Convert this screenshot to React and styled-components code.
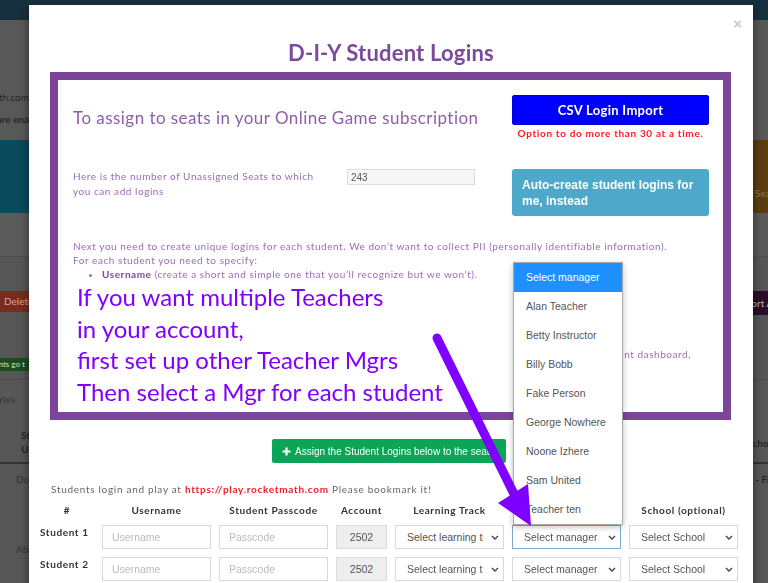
import React from 'react';
import styled, { createGlobalStyle } from 'styled-components';

const GlobalStyle = createGlobalStyle`
  html, body {
    margin: 0;
    padding: 0;
  }
  body {
    font-family: Lato, "Open Sans", Arial, sans-serif;
    background: #575757;
    overflow: hidden;
  }
  * {
    box-sizing: border-box;
  }
`;

/* ---------- dimmed page behind the modal ---------- */

const BackPage = styled.div`
  height: 583px;
  display: flex;
  flex-direction: column;
  overflow: hidden;
`;

const BackRow = styled.div`
  flex: none;
  display: grid;
  grid-template-columns: 29px 1fr 15px;
  height: ${p => p.$h}px;
  background: ${p => p.$bg || 'transparent'};
  border-bottom: ${p => (p.$line ? `${p.$lineW || 1}px solid ${p.$line}` : 'none')};
`;

const Rail = styled.div`
  display: flex;
  flex-direction: column;
  align-items: ${p => (p.$end ? 'flex-end' : 'flex-start')};
  background: ${p => p.$bg || 'transparent'};
  padding-top: ${p => p.$pt || 0}px;
  min-width: 0;
  white-space: nowrap;
`;

const BackText = styled.div`
  align-self: ${p => p.$self || 'auto'};
  margin-top: ${p => p.$mt || 0}px;
  margin-left: ${p => p.$ml || 0}px;
  padding-right: ${p => p.$pr || 0}px;
  font-size: ${p => p.$size || 10}px;
  line-height: 14px;
  font-weight: ${p => (p.$bold ? 700 : 400)};
  color: ${p => p.$color || '#262626'};
`;

const BackChip = styled.div`
  align-self: ${p => p.$self || 'auto'};
  margin-top: ${p => p.$mt || 0}px;
  margin-left: ${p => p.$ml || 0}px;
  height: ${p => p.$h}px;
  padding: 0 4px;
  background: ${p => p.$bg};
  color: ${p => p.$color};
  font-size: ${p => p.$size || 10}px;
  font-weight: ${p => (p.$bold ? 700 : 400)};
  line-height: ${p => p.$h}px;
`;

/* ---------- modal ---------- */

const Modal = styled.div`
  position: fixed;
  top: 5px;
  left: 29px;
  width: 724px;
  height: 600px;
  background: #fff;
  box-shadow: 0 3px 9px rgba(0, 0, 0, 0.5);
  padding: 0 15px 0 11px;
  display: flex;
  flex-direction: column;
`;

const Close = styled.div`
  position: absolute;
  top: 11px;
  right: 11px;
  font-family: "Liberation Sans", Arial, sans-serif;
  font-size: 15px;
  font-weight: 700;
  line-height: 1;
  color: #c9c9c9;
`;

const Title = styled.h2`
  margin: 34px 0 5px;
  padding-left: 4px;
  text-align: center;
  font-size: 22px;
  line-height: 28px;
  font-weight: 700;
  letter-spacing: 0.2px;
  color: #7b4a9b;
`;

const PurpleBox = styled.div`
  margin: 0 7px 0 10px;
  border: 8px solid #7b4598;
  padding: 15px 14px 5px 15px;
  display: grid;
  grid-template-columns: 1fr 197px;
  column-gap: 12px;
`;

const Lead = styled.div`
  align-self: center;
  font-size: 17px;
  line-height: 22px;
  color: #8d5fab;
  letter-spacing: 0.45px;
`;

const CsvCol = styled.div`
  display: flex;
  flex-direction: column;
`;

const CsvButton = styled.div`
  height: 30px;
  background: #0000ff;
  border: 1px solid #0000d8;
  border-radius: 2px;
  color: #fff;
  font-size: 13px;
  font-weight: 700;
  letter-spacing: 0.3px;
  display: flex;
  align-items: center;
  justify-content: center;
`;

const CsvNote = styled.div`
  margin-top: 2px;
  text-align: center;
  color: #ff1a1a;
  font-size: 10px;
  font-weight: 700;
  letter-spacing: 0.65px;
  line-height: 13px;
`;

const SeatsRow = styled.div`
  margin-top: 29px;
  display: flex;
  align-items: flex-start;
`;

const SmallText = styled.div`
  font-size: 10px;
  line-height: ${p => p.$lh || 14}px;
  color: #9a6cb5;
  letter-spacing: 0.55px;
`;

const SeatsText = styled(SmallText)`
  width: 274px;
  flex: none;
`;

const SeatsInput = styled.input`
  width: 128px;
  height: 16px;
  border: 1px solid #dcdcdc;
  background: #f7f7f7;
  padding: 0 3px;
  font-family: "Liberation Sans", Arial, sans-serif;
  font-size: 10px;
  color: #555;
`;

const AutoButton = styled.div`
  margin-top: 29px;
  height: 47px;
  background: #4ea8ca;
  border-radius: 3px;
  padding: 0 10px;
  display: flex;
  align-items: center;
  color: #fff;
  font-family: "Liberation Sans", Arial, sans-serif;
  font-size: 12px;
  font-weight: 700;
  line-height: 16px;
`;

const NextText = styled(SmallText)`
  grid-column: 1 / -1;
  margin-top: 23px;
`;

const Bullets = styled.ul`
  margin: 0;
  padding-left: 29px;

  strong {
    color: #7a4a9a;
  }
`;

const BigText = styled.div`
  padding-left: 4px;
  font-size: 24px;
  line-height: 31.5px;
  color: #8000ff;
  white-space: nowrap;
`;

const SideNote = styled(SmallText)`
  padding-top: 66px;
  padding-right: 18px;
  text-align: right;
  white-space: nowrap;
`;

const AssignButton = styled.div`
  align-self: center;
  margin-top: 19px;
  width: 234px;
  height: 24px;
  background: #0aa557;
  border-radius: 2px;
  padding-left: 10px;
  display: flex;
  align-items: center;
  gap: 4px;
  overflow: hidden;
  white-space: nowrap;
  color: #fff;
  font-family: "Liberation Sans", Arial, sans-serif;
  font-size: 10px;
`;

const LoginLine = styled.div`
  margin-top: 19px;
  padding-left: 11px;
  font-size: 10px;
  line-height: 14px;
  letter-spacing: 0.7px;
  color: #666;

  b {
    color: #ee1c25;
  }
`;

const StudentGrid = styled.div`
  margin-top: 7px;
  display: grid;
  grid-template-columns: 54px 109px 109px 51px 109px 109px 109px;
  column-gap: 8px;
  row-gap: 8px;
  align-items: start;
`;

const HeadCell = styled.div`
  text-align: center;
  font-size: 10px;
  font-weight: 700;
  letter-spacing: 0.6px;
  line-height: 14px;
  color: #333;
  white-space: nowrap;
`;

const RowLabel = styled.div`
  font-size: 10px;
  font-weight: 700;
  letter-spacing: 0.6px;
  line-height: 14px;
  color: #333;
  white-space: nowrap;
`;

const TextField = styled.input`
  width: 100%;
  height: 24px;
  border: 1px solid #d8d8e3;
  padding: 0 9px;
  font-family: "Liberation Sans", Arial, sans-serif;
  font-size: 10.5px;
  color: #555;
  background: #fff;

  &::placeholder {
    color: #bbb;
  }
`;

const AccountField = styled.div`
  height: 24px;
  border: 1px solid #dcdcdc;
  background: #eee;
  display: flex;
  align-items: center;
  justify-content: center;
  font-family: "Liberation Sans", Arial, sans-serif;
  font-size: 10.5px;
  color: #555;
`;

const SelectBox = styled.div`
  position: relative;
  height: 24px;
  border: 1px solid ${p => (p.$focus ? '#7fa8cf' : '#d8d8e3')};
  padding: 0 4px 0 11px;
  display: flex;
  align-items: center;
  gap: 8px;
  font-family: "Liberation Sans", Arial, sans-serif;
  font-size: 10.5px;
  color: #555;
  background: #fff;
`;

const SelectLabel = styled.span`
  flex: 1;
  overflow: hidden;
  white-space: nowrap;
`;

const Dropdown = styled.div`
  position: absolute;
  left: 0;
  bottom: calc(100% + 1px);
  width: 110px;
  background: #fff;
  border: 1px solid #a8a8a8;
  box-shadow: 0 2px 6px rgba(0, 0, 0, 0.25);
  z-index: 5;
`;

const Option = styled.div`
  height: 29px;
  line-height: 29px;
  padding-left: 12px;
  font-family: "Liberation Sans", Arial, sans-serif;
  font-size: 10.5px;
  color: ${p => (p.$active ? '#fff' : '#555')};
  background: ${p => (p.$active ? '#1e90ff' : '#fff')};
  white-space: nowrap;
`;

const ArrowLayer = styled.svg`
  position: absolute;
  left: 0;
  top: 0;
  pointer-events: none;
  z-index: 10;
`;

const Chevron = () => (
  <svg width="8" height="5" viewBox="0 0 8 5">
    <path d="M1 1 L4 4 L7 1" fill="none" stroke="#444" strokeWidth="1.4" />
  </svg>
);

const PlusIcon = () => (
  <svg width="9" height="9" viewBox="0 0 9 9">
    <path d="M4.5 0.5 V8.5 M0.5 4.5 H8.5" stroke="#fff" strokeWidth="2.2" />
  </svg>
);

const managers = [
  'Select manager',
  'Alan Teacher',
  'Betty Instructor',
  'Billy Bobb',
  'Fake Person',
  'George Nowhere',
  'Noone Izhere',
  'Sam United',
  'Teacher ten',
];

const headers = ['#', 'Username', 'Student Passcode', 'Account', 'Learning Track', 'Teacher', 'School (optional)'];

const Select = ({ label, focus, children }) => (
  <SelectBox $focus={focus}>
    <SelectLabel>{label}</SelectLabel>
    <Chevron />
    {children}
  </SelectBox>
);

const StudentRow = ({ n, open }) => (
  <>
    <RowLabel>Student {n}</RowLabel>
    <TextField placeholder="Username" />
    <TextField placeholder="Passcode" />
    <AccountField>2502</AccountField>
    <Select label="Select learning track" />
    <Select label="Select manager" focus={open}>
      {open && (
        <Dropdown>
          {managers.map((m, i) => (
            <Option key={m} $active={i === 0}>{m}</Option>
          ))}
        </Dropdown>
      )}
    </Select>
    <Select label="Select School" />
  </>
);

const Background = () => (
  <BackPage>
    <BackRow $h={20} $bg="#17303f" />
    <BackRow $h={120} $bg="#585858">
      <Rail $end $pt={70}>
        <BackText>play.rocketmath.com</BackText>
        <BackText $mt={8} $bold>Logins are ena</BackText>
      </Rail>
      <div />
      <Rail />
    </BackRow>
    <BackRow $h={73} $bg="#0b4a5b">
      <Rail />
      <div />
      <Rail $bg="#5c3d0e" $pt={46}>
        <BackText $ml={2} $color="#8d7656">Search</BackText>
      </Rail>
    </BackRow>
    <BackRow $h={44} $bg="#5b5b5b" $line="#4e4e4e" />
    <BackRow $h={123} $bg="#565656" $line="#4a4a4a">
      <Rail $pt={34}>
        <BackChip $h={21} $bg="#7a2a1f" $color="#d9a29b">Delete class</BackChip>
        <BackChip $self="flex-end" $mt={46} $h={13} $bg="#1a4d20" $color="#a3c9a3" $size={8} $bold>
          Students go t
        </BackChip>
      </Rail>
      <div />
      <Rail $pt={34}>
        <BackChip $ml={-22} $h={24} $bg="#2a0e2b" $color="#b5b5b5">Export All</BackChip>
      </Rail>
    </BackRow>
    <BackRow $h={84} $line="#333" $lineW={2}>
      <Rail $pt={12}>
        <BackText $self="flex-end" $pr={14} $color="#333">Categories</BackText>
        <BackText $mt={22} $ml={21} $bold>Student</BackText>
        <BackText $ml={21} $bold>Username</BackText>
      </Rail>
      <div />
      <Rail $pt={56}>
        <BackText $ml={-6} $bold>School</BackText>
      </Rail>
    </BackRow>
    <BackRow $h={119}>
      <Rail $pt={8}>
        <BackText $ml={16} $color="#333">Download</BackText>
        <BackText $mt={56} $ml={16} $color="#333">Abel</BackText>
      </Rail>
      <div />
      <Rail $pt={8}>
        <BackText $ml={-6} $bold>2 - Fact</BackText>
      </Rail>
    </BackRow>
  </BackPage>
);

export default function App() {
  return (
    <>
      <GlobalStyle />
      <Background />
      <Modal>
        <Close>×</Close>
        <Title>D-I-Y Student Logins</Title>

        <PurpleBox>
          <Lead>To assign to seats in your Online Game subscription</Lead>
          <CsvCol>
            <CsvButton>CSV Login Import</CsvButton>
            <CsvNote>Option to do more than 30 at a time.</CsvNote>
          </CsvCol>

          <SeatsRow>
            <SeatsText $lh={15}>
              Here is the number of Unassigned Seats to which
              <br />
              you can add logins
            </SeatsText>
            <SeatsInput defaultValue="243" />
          </SeatsRow>
          <AutoButton>Auto-create student logins for me, instead</AutoButton>

          <NextText>
            Next you need to create unique logins for each student. We don’t want to collect PII (personally identifiable information).
            <br />
            For each student you need to specify:
            <Bullets>
              <li>
                <strong>Username</strong> (create a short and simple one that you’ll recognize but we won’t).
              </li>
            </Bullets>
          </NextText>

          <BigText>
            If you want multiple Teachers
            <br />
            in your account,
            <br />
            first set up other Teacher Mgrs
            <br />
            Then select a Mgr for each student
          </BigText>
          <SideNote>in the student account dashboard,</SideNote>
        </PurpleBox>

        <AssignButton>
          <PlusIcon />
          Assign the Student Logins below to the seats
        </AssignButton>

        <LoginLine>
          Students login and play at <b>https://play.rocketmath.com</b> Please bookmark it!
        </LoginLine>

        <StudentGrid>
          {headers.map(h => (
            <HeadCell key={h}>{h}</HeadCell>
          ))}
          <StudentRow n={1} open />
          <StudentRow n={2} />
        </StudentGrid>

        <ArrowLayer width="724" height="600" viewBox="0 0 724 600">
          <line x1="408" y1="333" x2="485" y2="489" stroke="#8000ff" strokeWidth="9" strokeLinecap="round" />
          <polygon points="502,521 469,498 499,479" fill="#8000ff" />
        </ArrowLayer>
      </Modal>
    </>
  );
}
